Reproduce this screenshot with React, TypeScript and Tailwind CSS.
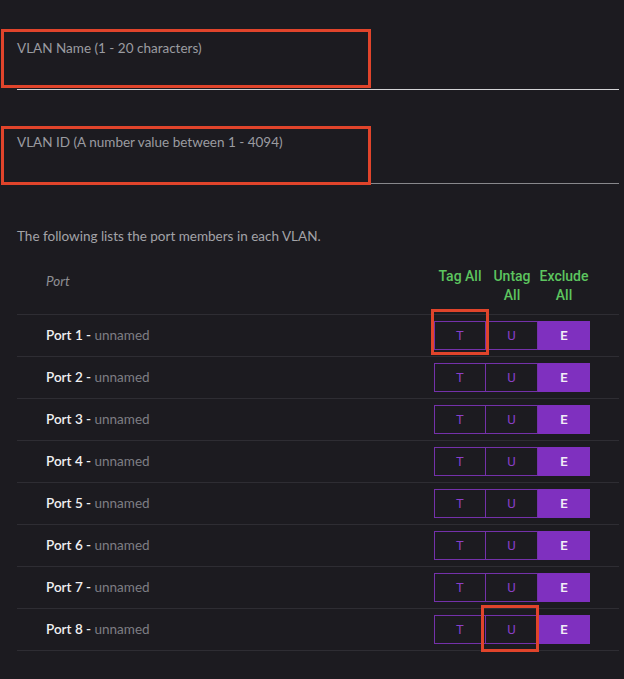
import React from "react";

const ports = [1, 2, 3, 4, 5, 6, 7, 8];

function Field({ label, line }: { label: string; line: string }) {
  return (
    <div className={`pt-[38px] border-b ${line}`}>
      <div className="h-[20px] leading-[20px] text-[13.5px] text-[#9b9ba0]">{label}</div>
      <div className="h-[31px]" />
    </div>
  );
}

export default function App() {
  return (
    <div
      className="relative w-[624px] min-h-[679px] bg-[#1c1b20] pl-[17px] pr-[5px]"
      style={{ fontFamily: "Lato, 'Liberation Sans', sans-serif" }}
    >
      <Field label="VLAN Name (1 - 20 characters)" line="border-[#d4d4d6]" />
      <div className="pt-[4px]">
        <Field label="VLAN ID (A number value between 1 - 4094)" line="border-[#88888c]" />
      </div>
      <p className="mt-[42px] h-[20px] leading-[20px] text-[13.5px] text-[#a3a3a8]">
        The following lists the port members in each VLAN.
      </p>

      <div className="flex pl-[29px] pr-[29px] pt-[21px] pb-[9px] border-b border-[#2e2d33]">
        <div className="flex-1 pt-[4px] text-[13.5px] leading-[20px] italic text-[#8e8e93]">Port</div>
        {["Tag All", "Untag All", "Exclude All"].map((h) => (
          <div
            key={h}
            className="w-[52px] text-center text-[14px] leading-[19px] font-medium text-[#5cc55f]"
            style={{ fontFamily: "Roboto, sans-serif" }}
          >
            {h}
          </div>
        ))}
      </div>

      {ports.map((p) => (
        <div key={p} className="flex items-center h-[42px] pl-[29px] pr-[29px] border-b border-[#2e2d33]">
          <div className="flex-1 text-[13.5px]">
            <span className="font-semibold text-[#f0f0f2]">Port {p} - </span>
            <span className="text-[#7e7e84]">unnamed</span>
          </div>
          <div className="flex h-[29px] text-[13px]" style={{ fontFamily: "Roboto, sans-serif" }}>
            <div className="w-[52px] flex items-center justify-center border border-[#7431aa] text-[#8a3fc8]">T</div>
            <div className="w-[52px] flex items-center justify-center border-y border-r border-[#7431aa] text-[#8a3fc8]">U</div>
            <div className="w-[52px] flex items-center justify-center bg-[#7f30bf] text-[#f2eef6] font-semibold">E</div>
          </div>
        </div>
      ))}

      <div className="absolute left-[1px] top-[29px] w-[370px] h-[59px] border-[3px] border-[#e0442b]" />
      <div className="absolute left-[1px] top-[126px] w-[370px] h-[59px] border-[3px] border-[#e0442b]" />
      <div className="absolute left-[431px] top-[309px] w-[58px] h-[46px] border-[3px] border-[#e0442b]" />
      <div className="absolute left-[481px] top-[605px] w-[58px] h-[47px] border-[3px] border-[#e0442b]" />
    </div>
  );
}
